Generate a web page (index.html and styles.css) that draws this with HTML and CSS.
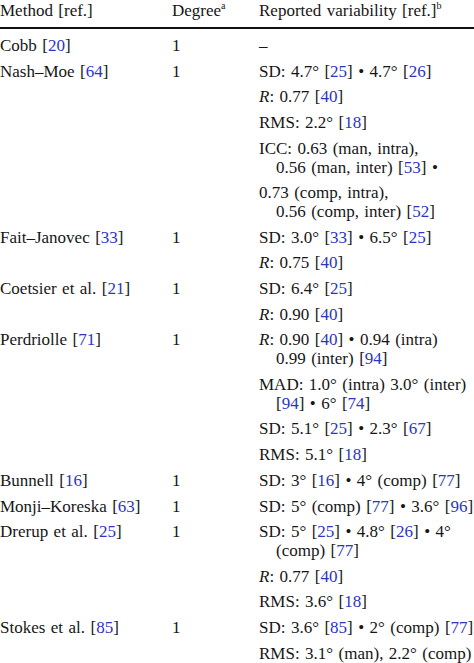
FILE: index.html
```html
<!DOCTYPE html>
<html>
<head>
<meta charset="utf-8">
<link rel="stylesheet" href="styles.css">
</head>
<body>
<table class="tbl">
  <thead>
    <tr>
      <th class="c1">Method [ref.]</th>
      <th class="c2">Degree<sup>a</sup></th>
      <th class="c3">Reported variability [ref.]<sup>b</sup></th>
    </tr>
  </thead>
  <tbody>
    <tr class="first">
      <td>Cobb [<span class="ref">20</span>]</td><td>1</td>
      <td><div class="e">–</div></td>
    </tr>
    <tr>
      <td>Nash–Moe [<span class="ref">64</span>]</td><td>1</td>
      <td>
        <div class="e">SD: 4.7° [<span class="ref">25</span>] • 4.7° [<span class="ref">26</span>]</div>
        <div class="e"><i>R</i>: 0.77 [<span class="ref">40</span>]</div>
        <div class="e">RMS: 2.2° [<span class="ref">18</span>]</div>
        <div class="e">ICC: 0.63 (man, intra),<br>0.56 (man, inter) [<span class="ref">53</span>] •</div>
        <div class="e">0.73 (comp, intra),<br>0.56 (comp, inter) [<span class="ref">52</span>]</div>
      </td>
    </tr>
    <tr>
      <td>Fait–Janovec [<span class="ref">33</span>]</td><td>1</td>
      <td>
        <div class="e">SD: 3.0° [<span class="ref">33</span>] • 6.5° [<span class="ref">25</span>]</div>
        <div class="e"><i>R</i>: 0.75 [<span class="ref">40</span>]</div>
      </td>
    </tr>
    <tr>
      <td>Coetsier et al. [<span class="ref">21</span>]</td><td>1</td>
      <td>
        <div class="e">SD: 6.4° [<span class="ref">25</span>]</div>
        <div class="e"><i>R</i>: 0.90 [<span class="ref">40</span>]</div>
      </td>
    </tr>
    <tr>
      <td>Perdriolle [<span class="ref">71</span>]</td><td>1</td>
      <td>
        <div class="e"><i>R</i>: 0.90 [<span class="ref">40</span>] • 0.94 (intra)<br>0.99 (inter) [<span class="ref">94</span>]</div>
        <div class="e">MAD: 1.0° (intra) 3.0° (inter)<br>[<span class="ref">94</span>] • 6° [<span class="ref">74</span>]</div>
        <div class="e">SD: 5.1° [<span class="ref">25</span>] • 2.3° [<span class="ref">67</span>]</div>
        <div class="e">RMS: 5.1° [<span class="ref">18</span>]</div>
      </td>
    </tr>
    <tr>
      <td>Bunnell [<span class="ref">16</span>]</td><td>1</td>
      <td><div class="e">SD: 3° [<span class="ref">16</span>] • 4° (comp) [<span class="ref">77</span>]</div></td>
    </tr>
    <tr>
      <td>Monji–Koreska [<span class="ref">63</span>]</td><td>1</td>
      <td><div class="e">SD: 5° (comp) [<span class="ref">77</span>] • 3.6° [<span class="ref">96</span>]</div></td>
    </tr>
    <tr>
      <td>Drerup et al. [<span class="ref">25</span>]</td><td>1</td>
      <td>
        <div class="e">SD: 5° [<span class="ref">25</span>] • 4.8° [<span class="ref">26</span>] • 4°<br>(comp) [<span class="ref">77</span>]</div>
        <div class="e"><i>R</i>: 0.77 [<span class="ref">40</span>]</div>
        <div class="e">RMS: 3.6° [<span class="ref">18</span>]</div>
      </td>
    </tr>
    <tr>
      <td>Stokes et al. [<span class="ref">85</span>]</td><td>1</td>
      <td>
        <div class="e">SD: 3.6° [<span class="ref">85</span>] • 2° (comp) [<span class="ref">77</span>]</div>
        <div class="e">RMS: 3.1° (man), 2.2° (comp)</div>
      </td>
    </tr>
  </tbody>
</table>
</body>
</html>
```

FILE: styles.css
```css
html, body {
  margin: 0;
  padding: 0;
  background: #ffffff;
  overflow: hidden;
}
body {
  width: 474px;
  height: 663px;
  font-family: "Liberation Serif", "Times New Roman", serif;
  font-size: 17px;
  word-spacing: 1.2px;
  color: #161616;
}
.tbl {
  border-collapse: collapse;
  border-spacing: 0;
  width: 474px;
  table-layout: fixed;
}
.tbl th {
  font-weight: normal;
  text-align: left;
  padding: 0 0 5px 0;
  line-height: 22px;
  border-bottom: 2px solid #111;
  white-space: nowrap;
  vertical-align: top;
}
.tbl th.c1 { width: 172px; }
.tbl th.c2 { width: 87px; }
.tbl sup {
  font-size: 10px;
  line-height: 0;
  vertical-align: 7px;
}
.tbl td {
  padding: 0;
  vertical-align: top;
  white-space: nowrap;
  line-height: 18.8px;
}
.tbl td:first-child,
.tbl td:nth-child(2) {
  padding-bottom: 6.9px;
}
.tbl tr.first td {
  padding-top: 8px;
}
.e {
  padding-left: 17px;
  text-indent: -17px;
  margin-bottom: 6.9px;
}
.ref {
  color: #2b35c2;
}
```
